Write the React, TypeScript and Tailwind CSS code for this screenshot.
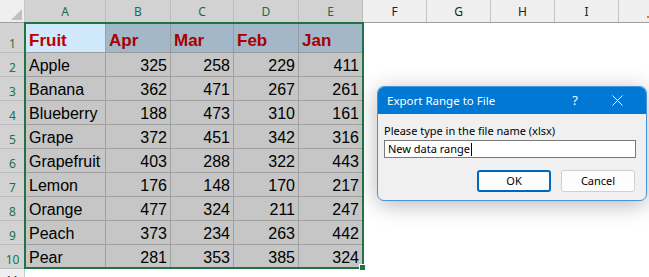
import React from "react";

const rows: [string, number, number, number, number][] = [
  ["Apple", 325, 258, 229, 411],
  ["Banana", 362, 471, 267, 261],
  ["Blueberry", 188, 473, 310, 161],
  ["Grape", 372, 451, 342, 316],
  ["Grapefruit", 403, 288, 322, 443],
  ["Lemon", 176, 148, 170, 217],
  ["Orange", 477, 324, 211, 247],
  ["Peach", 373, 234, 263, 442],
  ["Pear", 281, 353, 385, 324],
];

const selCols = [
  { l: "A", w: "w-[81px]" },
  { l: "B", w: "w-[65px]" },
  { l: "C", w: "w-[63px]" },
  { l: "D", w: "w-[65px]" },
  { l: "E", w: "w-[64px]" },
];
const otherCols = ["F", "G", "H", "I"];

const uiFont = { fontFamily: '"Noto Sans", "Open Sans", sans-serif' };
const cellFont = { fontFamily: '"Liberation Sans", Arial, sans-serif' };

function RowHeader({ n, h }: { n: number; h: string }) {
  return (
    <div
      className={`w-[25px] ${h} shrink-0 bg-[#d2d2d2] border-b border-[#bdbdbd] flex items-end justify-center pb-[2px] text-[12px] leading-none text-[#217346]`}
      style={uiFont}
    >
      {n}
    </div>
  );
}

export default function App() {
  return (
    <div className="relative w-[649px] h-[277px] overflow-hidden bg-white">
      {/* column headers */}
      <div className="flex h-[23px] border-b border-[#9e9e9e] text-[12px]" style={uiFont}>
        <div className="relative w-[25px] shrink-0 bg-[#efefef] border-r border-[#c8c8c8]">
          <div className="absolute right-[2px] bottom-[2px] w-0 h-0 border-l-[11px] border-l-transparent border-b-[11px] border-b-[#c0c0c0]" />
        </div>
        {selCols.map((c) => (
          <div
            key={c.l}
            className={`${c.w} shrink-0 bg-[#d2d2d2] border-r border-[#bdbdbd] flex items-center justify-center text-[#1e6b45] pt-[1px]`}
          >
            {c.l}
          </div>
        ))}
        {otherCols.map((c) => (
          <div
            key={c}
            className="w-[64px] shrink-0 bg-[#efefef] border-r border-[#c6c6c6] flex items-center justify-center text-[#222] pt-[1px]"
          >
            {c}
          </div>
        ))}
        <div className="flex-1 bg-[#efefef] relative">
          <div className="absolute right-0 top-[16px] w-[2px] h-[2px] bg-[#e07b2a]" />
        </div>
      </div>

      {/* row 1 */}
      <div className="flex h-[30px]" style={cellFont}>
        <RowHeader n={1} h="h-[30px]" />
        <div className="w-[81px] shrink-0 bg-[#cfe9fb] border-r border-b border-[#a0a0a0] flex items-end pl-[4px] pb-[3px] text-[17px] font-bold text-[#c00000] leading-none">
          Fruit
        </div>
        {["Apr", "Mar", "Feb", "Jan"].map((m, i) => (
          <div
            key={m}
            className={`${selCols[i + 1].w} shrink-0 bg-[#a2b7c7] border-r border-b border-[#9a9a9a] flex items-end pl-[3px] pb-[3px] text-[17px] font-bold text-[#a80000] leading-none`}
          >
            {m}
          </div>
        ))}
        <div className="flex-1" />
      </div>

      {/* data rows */}
      {rows.map((r, ri) => (
        <div key={r[0]} className="flex h-[24px]" style={cellFont}>
          <RowHeader n={ri + 2} h="h-[24px]" />
          <div className="w-[81px] shrink-0 bg-[#c6c6c6] border-r border-b border-[#a0a0a0] flex items-end pl-[4px] pb-[2px] text-[16px] text-black leading-none">
            {r[0]}
          </div>
          {[r[1], r[2], r[3], r[4]].map((v, i) => (
            <div
              key={i}
              className={`${selCols[i + 1].w} shrink-0 bg-[#c6c6c6] border-r border-b border-[#a0a0a0] flex items-end justify-end pr-[3px] pb-[2px] text-[16px] text-black leading-none`}
            >
              {v}
            </div>
          ))}
          <div className="flex-1" />
        </div>
      ))}

      {/* row 11 partial */}
      <div className="flex h-[20px]">
        <div
          className="w-[25px] shrink-0 bg-[#efefef] border-r border-[#c8c8c8] flex items-start justify-center pt-[6px] text-[12px] leading-none text-[#333]"
          style={uiFont}
        >
          11
        </div>
        <div className="flex-1" />
      </div>

      {/* selection border */}
      <div className="absolute left-[24px] top-[22px] w-[340px] h-[247px] border-2 border-[#217346] pointer-events-none" />
      <div className="absolute left-[359px] top-[264px] w-[7px] h-[7px] bg-[#217346] border border-white" />

      {/* dialog */}
      <div
        className="absolute left-[377px] top-[86px] w-[270px] h-[115px] rounded-[7px] overflow-hidden border border-[#4a95d8] bg-[#f0f0f0] shadow-[0_4px_22px_rgba(0,0,0,0.28)] flex flex-col"
        style={uiFont}
      >
        <div className="h-[27px] shrink-0 bg-[#0078d4] flex items-center text-white text-[11.5px] pl-[9px]">
          <span className="flex-1">Export Range to File</span>
          <span className="w-[20px] text-center mr-[27px] text-[13px]">?</span>
          <svg width="11" height="11" viewBox="0 0 11 11" className="mr-[23px]">
            <path d="M0.5 0.5 L10.5 10.5 M10.5 0.5 L0.5 10.5" stroke="white" strokeWidth="1" />
          </svg>
        </div>
        <div className="flex flex-col pl-[6px] pr-[10px] pt-[11px]">
          <div className="text-[11px] leading-none text-black">Please type in the file name (xlsx)</div>
          <div className="mt-[4px] h-[18px] bg-white border border-[#7a7a7a] flex items-center pl-[3px] text-[11px] text-black">
            New data range
            <span className="inline-block w-[1px] h-[13px] bg-black ml-[1px]" />
          </div>
          <div className="flex justify-end gap-[10px] mt-[12px] pr-[1px]">
            <div className="w-[74px] h-[22px] rounded-[3px] border-2 border-[#0067c0] bg-[#fdfdfd] flex items-center justify-center text-[11px] text-black">
              OK
            </div>
            <div className="w-[74px] h-[22px] rounded-[3px] border border-[#d0d0d0] bg-[#fdfdfd] flex items-center justify-center text-[11px] text-black">
              Cancel
            </div>
          </div>
        </div>
      </div>
    </div>
  );
}
